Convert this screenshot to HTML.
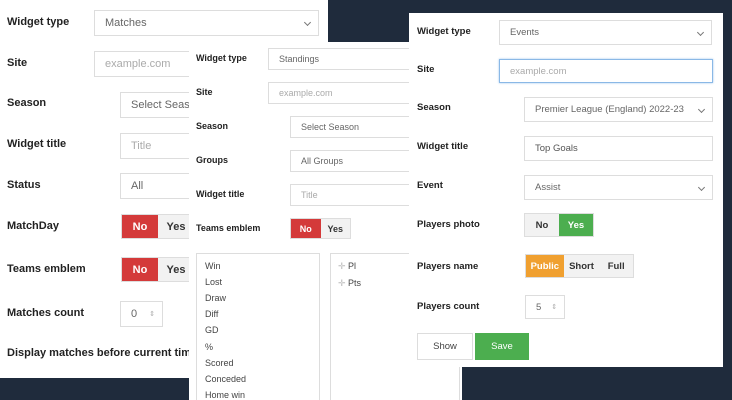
<!DOCTYPE html>
<html><head><style>
*{box-sizing:border-box;margin:0;padding:0}
html,body{width:732px;height:400px;overflow:hidden}
body{background:#1f2b3c;position:relative;font-family:"Liberation Sans",sans-serif;color:#555}
.p{position:absolute;background:#fff;overflow:hidden}
.l{position:absolute;font-weight:bold;color:#222;white-space:nowrap}
.b{position:absolute;border:1px solid #ddd;background:#fff;color:#666;white-space:nowrap;overflow:hidden;display:flex;align-items:center;padding-left:10px}
.ph{color:#aaa}
.ch::after{content:"";position:absolute;right:8px;top:50%;width:4px;height:4px;margin-top:-3px;border-right:1px solid #777;border-bottom:1px solid #777;transform:rotate(45deg)}
.t{position:absolute;display:flex;border:1px solid #ddd;background:#f2f2f2;font-weight:bold;color:#333}
.t span{display:flex;align-items:center;justify-content:center}
.r{background:#d43a3a;color:#fff}
.g{background:#4cae4f;color:#fff}
.o{background:#f0a030;color:#fff}
.li{position:absolute;font-size:9px;color:#444}
</style></head><body>
<div class="p" style="left:0;top:0;width:328px;height:378px;font-size:11px">
<div class="l" style="left:7px;top:16px">Widget type</div>
<div class="b ch" style="left:94px;top:10px;width:225px;height:26px">Matches</div>
<div class="l" style="left:7px;top:57px">Site</div>
<div class="b ph" style="left:94px;top:51px;width:120px;height:26px">example.com</div>
<div class="l" style="left:7px;top:97px">Season</div>
<div class="b" style="left:120px;top:92px;width:100px;height:26px">Select Season</div>
<div class="l" style="left:7px;top:138px">Widget title</div>
<div class="b ph" style="left:120px;top:133px;width:100px;height:26px">Title</div>
<div class="l" style="left:7px;top:179px">Status</div>
<div class="b" style="left:120px;top:173px;width:100px;height:26px">All</div>
<div class="l" style="left:7px;top:220px">MatchDay</div>
<div class="t" style="left:121px;top:214px;width:80px;height:25px"><span class="r" style="width:36px">No</span><span style="width:36px">Yes</span></div>
<div class="l" style="left:7px;top:263px">Teams emblem</div>
<div class="t" style="left:121px;top:257px;width:80px;height:25px"><span class="r" style="width:36px">No</span><span style="width:36px">Yes</span></div>
<div class="l" style="left:7px;top:307px">Matches count</div>
<div class="b" style="left:120px;top:301px;width:43px;height:26px">0 <span style="font-size:7px;color:#aaa;margin-left:12px">⇕</span></div>
<div class="l" style="left:7px;top:347px">Display matches before current time</div>
</div>
<div class="p" style="left:189px;top:42px;width:273px;height:358px;font-size:9px">
<div class="l" style="left:7px;top:11px">Widget type</div>
<div class="b" style="left:79px;top:6px;width:200px;height:22px">Standings</div>
<div class="l" style="left:7px;top:45px">Site</div>
<div class="b ph" style="left:79px;top:40px;width:200px;height:22px">example.com</div>
<div class="l" style="left:7px;top:79px">Season</div>
<div class="b" style="left:101px;top:74px;width:180px;height:22px">Select Season</div>
<div class="l" style="left:7px;top:113px">Groups</div>
<div class="b" style="left:101px;top:108px;width:180px;height:22px">All Groups</div>
<div class="l" style="left:7px;top:147px">Widget title</div>
<div class="b ph" style="left:101px;top:142px;width:180px;height:22px">Title</div>
<div class="l" style="left:7px;top:181px">Teams emblem</div>
<div class="t" style="left:101px;top:176px;width:61px;height:21px"><span class="r" style="width:30px">No</span><span style="width:30px">Yes</span></div>
<div style="position:absolute;left:7px;top:211px;width:124px;height:160px;border:1px solid #ddd"></div>
<div style="position:absolute;left:141px;top:211px;width:130px;height:160px;border:1px solid #ddd"></div>
<div class="li" style="left:16px;top:219px">Win</div>
<div class="li" style="left:16px;top:235px">Lost</div>
<div class="li" style="left:16px;top:251px">Draw</div>
<div class="li" style="left:16px;top:267px">Diff</div>
<div class="li" style="left:16px;top:283px">GD</div>
<div class="li" style="left:16px;top:300px">%</div>
<div class="li" style="left:16px;top:316px">Scored</div>
<div class="li" style="left:16px;top:332px">Conceded</div>
<div class="li" style="left:16px;top:348px">Home win</div>
<div class="li" style="left:149px;top:219px"><span style="color:#bbb">✛</span> Pl</div>
<div class="li" style="left:149px;top:236px"><span style="color:#bbb">✛</span> Pts</div>
</div>
<div class="p" style="left:409px;top:13px;width:314px;height:354px;font-size:9.5px">
<div class="l" style="left:8px;top:13px">Widget type</div>
<div class="b ch" style="left:90px;top:7px;width:213px;height:25px">Events</div>
<div class="l" style="left:8px;top:51px">Site</div>
<div class="b ph" style="left:90px;top:46px;width:214px;height:24px;border-color:#8ab8e6;box-shadow:0 0 2px #9cc4ec">example.com</div>
<div class="l" style="left:8px;top:89px">Season</div>
<div class="b ch" style="left:115px;top:84px;width:189px;height:25px">Premier League (England) 2022-23</div>
<div class="l" style="left:8px;top:128px">Widget title</div>
<div class="b" style="left:115px;top:123px;width:189px;height:25px;color:#555">Top Goals</div>
<div class="l" style="left:8px;top:167px">Event</div>
<div class="b ch" style="left:115px;top:162px;width:189px;height:25px">Assist</div>
<div class="l" style="left:8px;top:206px">Players photo</div>
<div class="t" style="left:115px;top:200px;width:70px;height:24px"><span style="width:35px">No</span><span class="g" style="width:35px">Yes</span></div>
<div class="l" style="left:8px;top:248px">Players name</div>
<div class="t" style="left:116px;top:241px;width:109px;height:24px"><span class="o" style="width:38px">Public</span><span style="width:36px">Short</span><span style="width:34px">Full</span></div>
<div class="l" style="left:8px;top:288px">Players count</div>
<div class="b" style="left:116px;top:282px;width:40px;height:24px">5 <span style="font-size:7px;color:#aaa;margin-left:10px">⇕</span></div>
<div class="b" style="left:8px;top:320px;width:56px;height:27px;justify-content:center;padding:0;color:#444">Show</div>
<div class="b g" style="left:66px;top:320px;width:54px;height:27px;justify-content:center;padding:0;border-color:#4cae4f">Save</div>
</div>
</body></html>
